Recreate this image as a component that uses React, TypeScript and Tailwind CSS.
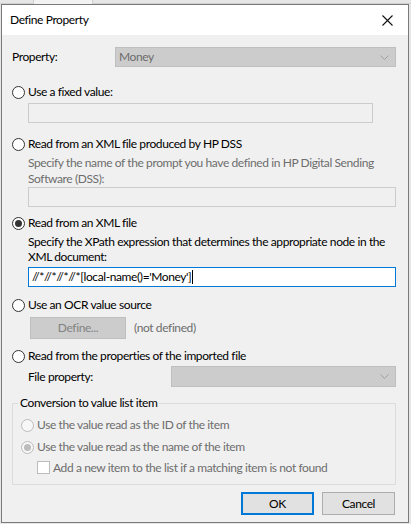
import React from "react";

const font = "font-['Segoe_UI','Lato',sans-serif] text-[12px] leading-[16px] tracking-[-0.4px]";

function Radio({ checked = false, disabled = false }: { checked?: boolean; disabled?: boolean }) {
  return (
    <span
      className={`flex h-[13px] w-[13px] shrink-0 items-center justify-center rounded-full border ${
        disabled ? "border-[#bcbcbc] bg-[#f7f7f7]" : "border-[#333333] bg-white"
      }`}>
      {checked && (
        <span className={`h-[7px] w-[7px] rounded-full ${disabled ? "bg-[#bcbcbc]" : "bg-[#333333]"}`} />
      )}
    </span>
  );
}

function Chevron() {
  return (
    <svg width="9" height="5" viewBox="0 0 9 5" className="shrink-0">
      <path d="M0.5 0.5 L4.5 4.5 L8.5 0.5" fill="none" stroke="#a0a0a0" strokeWidth="1" />
    </svg>
  );
}

function DisabledSelect({ value, className }: { value?: string; className: string }) {
  return (
    <div
      className={`flex items-center justify-between border border-[#bfbfbf] bg-[#cccccc] pl-[3px] pr-[6px] text-[#6d6d6d] ${className}`}>
      <span>{value}</span>
      <Chevron />
    </div>
  );
}

export default function App() {
  return (
    <div className={`h-[524px] w-[411px] overflow-hidden bg-[#e6e6e6] ${font}`}>
      {/* window behind */}
      <div className="flex h-[4px]">
        <div className="w-[33px] border-b border-[#d0d0d0]" />
        <div className="w-[60px] border-x border-[#cfcfcf] bg-[#f2f2f2]" />
        <div className="flex-1 border-b border-[#d0d0d0]" />
      </div>

      <div className="ml-[1px] flex h-[519px] w-[408px] flex-col border border-[#7a7a7a] bg-[#f0f0f0]">
        {/* title bar */}
        <div className="flex h-[30px] shrink-0 items-center justify-between bg-white pl-[8px] pr-[15px]">
          <span className="text-black">Define Property</span>
          <svg width="11" height="11" viewBox="0 0 11 11">
            <path d="M0.5 0.5 L10.5 10.5 M10.5 0.5 L0.5 10.5" stroke="#111" strokeWidth="1.1" />
          </svg>
        </div>

        <div className="flex flex-col pl-[10px] pr-[12px] text-black">
          {/* property */}
          <div className="mt-[12px] flex h-[20px] items-center">
            <span className="w-[103px]">Property:</span>
            <DisabledSelect value="Money" className="h-[20px] flex-1" />
          </div>

          {/* fixed value */}
          <div className="mt-[17px] flex h-[16px] items-center gap-[3px]">
            <Radio />
            <span>Use a fixed value:</span>
          </div>
          <div className="ml-[16px] mt-[3px] h-[20px] w-[345px] border border-[#cccccc] bg-[#f0f0f0]" />

          {/* HP DSS */}
          <div className="mt-[13px] flex h-[16px] items-center gap-[3px]">
            <Radio />
            <span>Read from an XML file produced by HP DSS</span>
          </div>
          <p className="ml-[16px] mt-[3px] text-[#6d6d6d]">
            Specify the name of the prompt you have defined in HP Digital Sending Software (DSS):
          </p>
          <div className="ml-[16px] h-[20px] border border-[#cccccc] bg-[#f0f0f0]" />

          {/* XML file */}
          <div className="mt-[8px] flex h-[16px] items-center gap-[3px]">
            <Radio checked />
            <span>Read from an XML file</span>
          </div>
          <p className="ml-[16px] mt-[3px] leading-[15px]">
            Specify the XPath expression that determines the appropriate node in the XML document:
          </p>
          <div className="ml-[16px] mt-[3px] flex h-[20px] items-center border border-[#0078d7] bg-white pl-[3px]">
            <span>//*//*//*//*[local-name()='Money']</span>
            <span className="ml-[1px] h-[14px] w-[1px] bg-black" />
          </div>

          {/* OCR */}
          <div className="mt-[10px] flex h-[16px] items-center gap-[3px]">
            <Radio />
            <span>Use an OCR value source</span>
          </div>
          <div className="ml-[18px] mt-[4px] flex items-center gap-[8px]">
            <div className="flex h-[22px] w-[96px] items-center justify-center border border-[#bfbfbf] bg-[#cccccc] text-[#838383]">
              Define...
            </div>
            <span className="text-[#6d6d6d]">(not defined)</span>
          </div>

          {/* file properties */}
          <div className="mt-[9px] flex h-[16px] items-center gap-[3px]">
            <Radio />
            <span>Read from the properties of the imported file</span>
          </div>
          <div className="ml-[16px] mt-[2px] flex h-[21px] items-center">
            <span className="w-[143px]">File property:</span>
            <DisabledSelect className="h-[21px] flex-1" />
          </div>

          {/* group box */}
          <fieldset className="mt-[8px] h-[90px] border border-[#dcdcdc] px-[8px] pb-0">
            <legend className="ml-[-3px] px-[2px]">Conversion to value list item</legend>
            <div className="mt-[6px] flex h-[16px] items-center gap-[3px] text-[#6d6d6d]">
              <Radio disabled />
              <span>Use the value read as the ID of the item</span>
            </div>
            <div className="mt-[6px] flex h-[16px] items-center gap-[3px] text-[#6d6d6d]">
              <Radio disabled checked />
              <span>Use the value read as the name of the item</span>
            </div>
            <div className="ml-[16px] mt-[6px] flex h-[13px] items-center gap-[3px] text-[#6d6d6d]">
              <span className="h-[13px] w-[13px] shrink-0 border border-[#bcbcbc] bg-white" />
              <span>Add a new item to the list if a matching item is not found</span>
            </div>
          </fieldset>

          {/* buttons */}
          <div className="mt-[7px] flex justify-end gap-[8px] pr-[1px]">
            <div className="flex h-[23px] w-[73px] items-center justify-center border-2 border-[#0078d7] bg-[#e1e1e1]">
              OK
            </div>
            <div className="flex h-[23px] w-[73px] items-center justify-center border border-[#adadad] bg-[#e1e1e1]">
              Cancel
            </div>
          </div>
        </div>
      </div>
    </div>
  );
}
